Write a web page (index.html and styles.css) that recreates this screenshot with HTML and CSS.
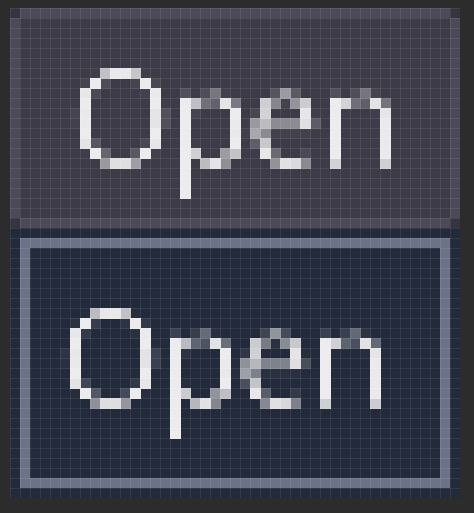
FILE: index.html
```html
<!DOCTYPE html>
<html>
<head>
<meta charset="utf-8">
<link rel="stylesheet" href="styles.css">
</head>
<body>
<svg class="defs" width="0" height="0" aria-hidden="true">
  <filter id="pix" color-interpolation-filters="sRGB">
    <feMorphology in="SourceGraphic" operator="erode" radius="1" result="thin"/>
    <feGaussianBlur in="thin" stdDeviation="1.8" result="avg"/>
    <feFlood x="5" y="5" width="1" height="1" flood-color="#fff" result="dot"/>
    <feOffset in="dot" dx="0" dy="0" x="0" y="0" width="10" height="10" result="cell"/>
    <feTile in="cell" result="grid"/>
    <feComposite in="avg" in2="grid" operator="in" result="samp"/>
    <feMorphology in="samp" operator="dilate" radius="5"/>
  </filter>
</svg>
<div class="canvas">
  <div class="btn hover"><span class="label">Open</span></div>
  <div class="btn focus"><div class="frame"><span class="label">Open</span></div></div>
  <div class="grid"></div>
</div>
</body>
</html>
```
FILE: styles.css
```css
html, body {
  margin: 0;
  padding: 0;
  background: #2c2c2c;
}
.defs {
  position: absolute;
  width: 0;
  height: 0;
  overflow: hidden;
}
.canvas {
  position: relative;
  margin: 8px 0 0 10px;
  width: 450px;
  height: 490px;
}
.btn {
  box-sizing: border-box;
  width: 450px;
}
.hover {
  height: 220px;
  padding: 40px 0 0 60px;
  background:
    linear-gradient(#3d3b48, #3d3b48) 10px 10px / calc(100% - 20px) calc(100% - 20px) no-repeat,
    linear-gradient(#4c4a58, #4c4a58) 10px 0 / calc(100% - 20px) 100% no-repeat,
    linear-gradient(#4c4a58, #4c4a58) 0 10px / 100% calc(100% - 20px) no-repeat,
    #35343f;
}
.focus {
  height: 270px;
  padding: 10px;
  background: #222a3b;
}
.frame {
  box-sizing: border-box;
  height: 250px;
  border: 10px solid #6b7388;
  background: #222a3b;
  padding: 40px 0 0 30px;
}
.label {
  display: block;
  box-sizing: border-box;
  width: 340px;
  height: 180px;
  padding: 2px 0 0 0;
  text-indent: -1.5px;
  font-family: "Noto Sans", sans-serif;
  font-size: 134px;
  line-height: 128px;
  letter-spacing: -4.5px;
  color: #ececee;
  filter: url(#pix);
}
.grid {
  position: absolute;
  inset: 0;
  pointer-events: none;
  background-image:
    linear-gradient(to right, rgba(255, 255, 255, 0.08) 1px, transparent 1px),
    linear-gradient(to bottom, rgba(255, 255, 255, 0.08) 1px, transparent 1px);
  background-size: 10px 10px;
}
```
